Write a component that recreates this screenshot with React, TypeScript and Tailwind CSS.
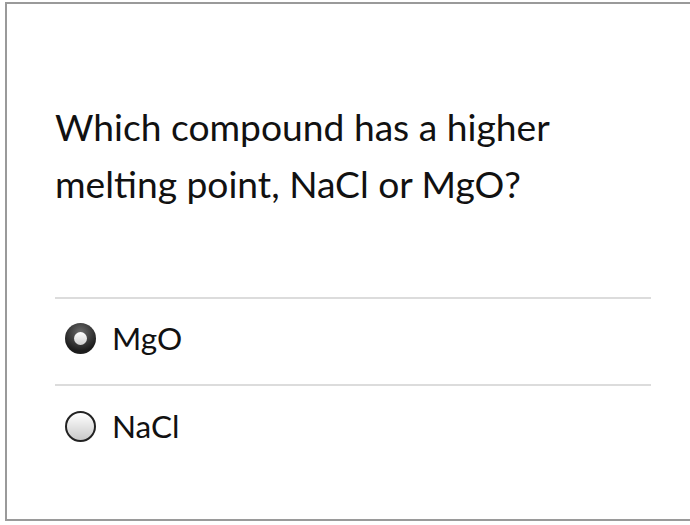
import { useState } from 'react';

const options = ['MgO', 'NaCl'];

const Radio = ({ checked }: { checked: boolean }) =>
  checked ? (
    <span className="flex h-[31px] w-[31px] items-center justify-center rounded-full bg-[radial-gradient(circle_at_50%_30%,#6b6b6b,#1c1c1c_70%)]">
      <span className="h-[13px] w-[13px] rounded-full bg-[linear-gradient(#ffffff,#cfcfcf)]" />
    </span>
  ) : (
    <span className="h-[31px] w-[31px] rounded-full border-[2px] border-[#222] bg-[linear-gradient(#ffffff,#c9c9c9)]" />
  );

export default function App() {
  const [selected, setSelected] = useState('MgO');

  return (
    <div className="flex h-[525px] w-[690px] overflow-hidden bg-white pl-[5px] pt-[2px] font-['Lato',sans-serif] text-[#111]">
      <div className="h-[519px] flex-1 border-b-2 border-l-2 border-t-2 border-[#9a9a9a] pl-[48px] pt-[94px]">
        <h1 className="w-[580px] text-[37.2px] leading-[57px]">
          Which compound has a higher melting point, NaCl or MgO?
        </h1>

        <div className="mt-[85px] w-[596px] border-t-2 border-[#dcdcdc]">
          {options.map((opt, i) => (
            <label
              key={opt}
              onClick={() => setSelected(opt)}
              className={
                'flex h-[87px] cursor-pointer items-center gap-[16px] pb-[6px] pl-[10px] ' +
                (i < options.length - 1 ? 'border-b-2 border-[#dcdcdc]' : '')
              }
            >
              <Radio checked={selected === opt} />
              <span className="text-[31.5px]">{opt}</span>
            </label>
          ))}
        </div>
      </div>
    </div>
  );
}
